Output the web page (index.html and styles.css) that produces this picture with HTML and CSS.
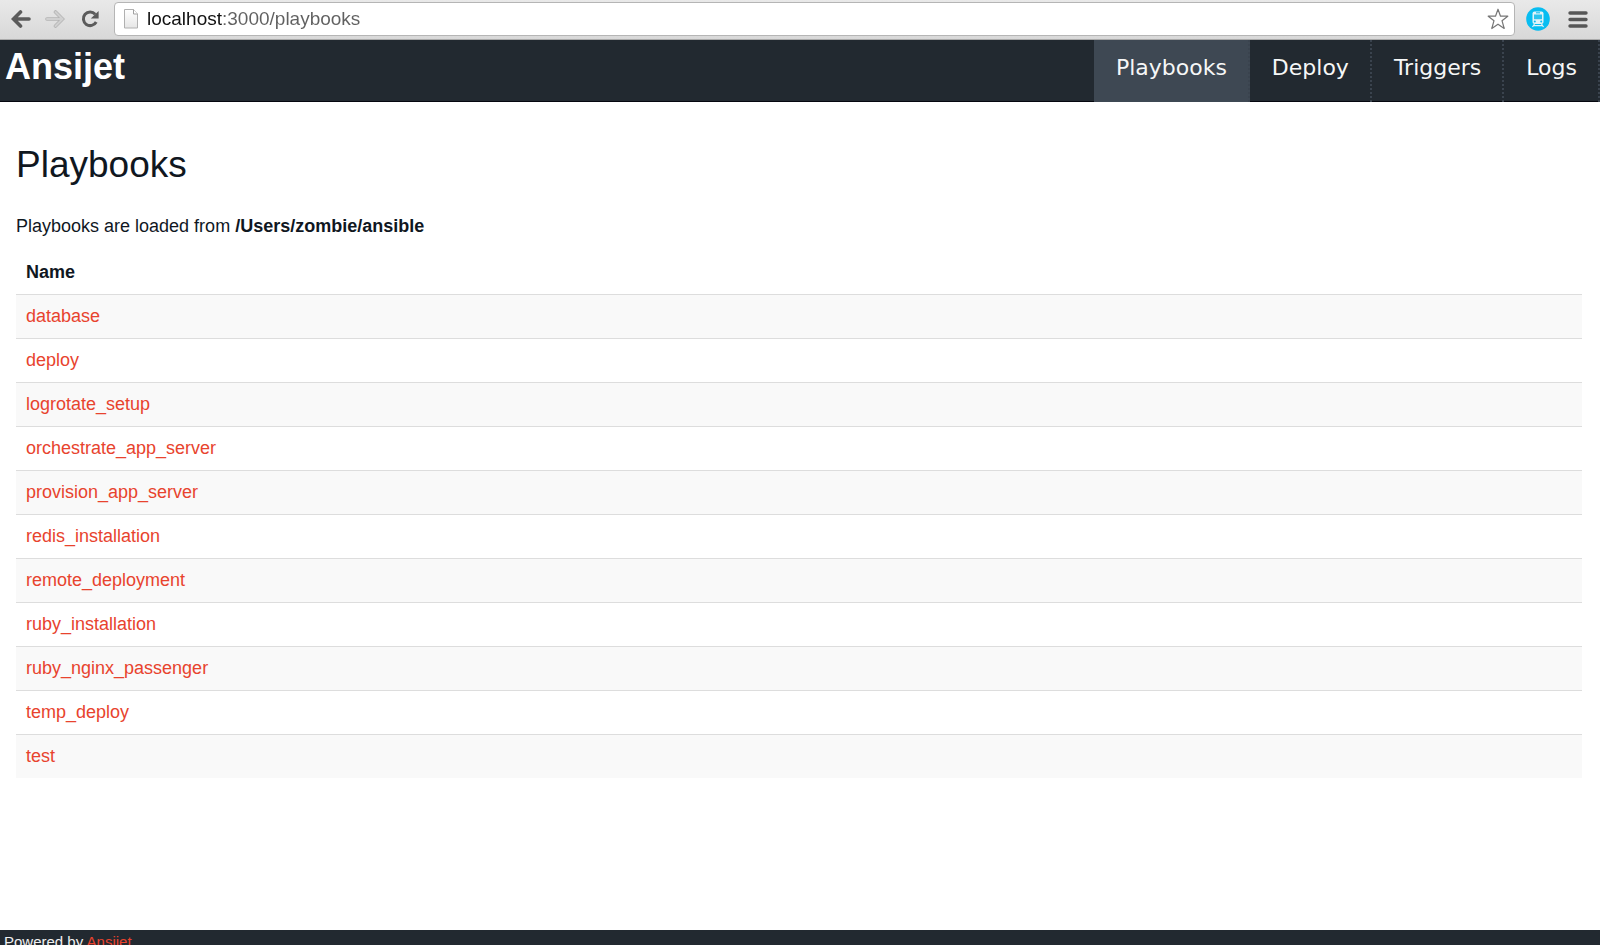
FILE: index.html
```html
<!DOCTYPE html>
<html lang="en">
<head>
    <meta charset="UTF-8">
    <title>Ansijet</title>
    <link rel="stylesheet" href="styles.css">
</head>
<body>
<div class="toolbar">
    <button type="button" class="tool back" aria-label="Back">
        <svg width="20" height="18" viewBox="0 0 20 18"><path d="M9.500 2L2.500 9l7 7M3 9h15" fill="none" stroke="#5b5b5b" stroke-width="3.600" stroke-linecap="round" stroke-linejoin="miter"/></svg>
    </button>
    <button type="button" class="tool forward" aria-label="Forward">
        <svg width="20" height="18" viewBox="0 0 20 18"><path d="M10.500 2l7 7-7 7M17 9H2" fill="none" stroke="#b4b4b4" stroke-width="3.600" stroke-linecap="round"/><path d="M10.500 2l7 7-7 7M17 9H2" fill="none" stroke="#d0d0d0" stroke-width="2" stroke-linecap="round"/></svg>
    </button>
    <button type="button" class="tool reload" aria-label="Reload">
        <svg width="18" height="18" viewBox="0 0 18 18"><path d="M14.200 4.200A6.800 6.800 0 1 0 15.200 12" fill="none" stroke="#5b5b5b" stroke-width="3"/><path d="M17.600 1v7.600H9.800z" fill="#5b5b5b"/></svg>
    </button>
    <div class="address">
        <svg width="16" height="20" viewBox="0 0 16 20">
            <defs><linearGradient id="sheet" x1="0" y1="0" x2="0" y2="1"><stop offset="0" stop-color="#fff"/><stop offset="1" stop-color="#e6e6e6"/></linearGradient></defs>
            <path d="M1.500 .5h9l4 4.500v14h-13z" fill="url(#sheet)" stroke="#b0b0b0"/><path d="M10.500 .5V5h4" fill="#fff" stroke="#a0a0a0"/>
        </svg>
        <input type="text" class="url" aria-label="Address" value="localhost:3000/playbooks">
        <button type="button" class="tool" aria-label="Bookmark">
            <svg width="22" height="22" viewBox="0 0 22 22"><path d="M11 1.200l2.500 7h7.300l-5.800 4.500 2.200 7.800L11 16.200l-6.200 4.300L7 12.700 1.200 8.200h7.300z" fill="#fff" stroke="#777" stroke-width="1.200" stroke-linejoin="round"/></svg>
        </button>
    </div>
    <button type="button" class="tool extension" aria-label="Trains">
        <svg width="24" height="24" viewBox="0 0 24 24">
            <circle cx="12" cy="12" r="11.800" fill="#08bdf1"/>
            <path d="M8.500 4.500h7q2 0 2 2v8.500q0 2-2 2h-7q-2 0-2-2V6.500q0-2 2-2z" fill="#e2f3f8"/>
            <path d="M10 5.800h4" stroke="#08bdf1"/>
            <path d="M8 7.500h8v4.700H8z" fill="#2cc4ee"/>
            <circle cx="8.800" cy="14.500" r="1" fill="#08bdf1"/><circle cx="15.200" cy="14.500" r="1" fill="#08bdf1"/>
            <path d="M8.500 17l-2 3M15.500 17l2 3M7.500 18.700h9" stroke="#e2f3f8" stroke-width="1.200"/>
        </svg>
    </button>
    <button type="button" class="tool" aria-label="Menu">
        <svg width="20" height="18" viewBox="0 0 20 18"><path d="M2 3h16M2 9.500h16M2 16h16" stroke="#575757" stroke-width="3.400" stroke-linecap="round"/></svg>
    </button>
</div>

<header class="header">
    <a href="#" class="brand">Ansijet</a>
    <nav class="nav">
        <a href="#" class="active">Playbooks</a>
        <a href="#">Deploy</a>
        <a href="#">Triggers</a>
        <a href="#">Logs</a>
    </nav>
</header>

<main class="content">
    <h1>Playbooks</h1>
    <p>Playbooks are loaded from <strong>/Users/zombie/ansible</strong></p>
    <table class="list">
        <thead>
            <tr><th>Name</th></tr>
        </thead>
        <tbody>
            <tr><td><a href="#">database</a></td></tr>
            <tr><td><a href="#">deploy</a></td></tr>
            <tr><td><a href="#">logrotate_setup</a></td></tr>
            <tr><td><a href="#">orchestrate_app_server</a></td></tr>
            <tr><td><a href="#">provision_app_server</a></td></tr>
            <tr><td><a href="#">redis_installation</a></td></tr>
            <tr><td><a href="#">remote_deployment</a></td></tr>
            <tr><td><a href="#">ruby_installation</a></td></tr>
            <tr><td><a href="#">ruby_nginx_passenger</a></td></tr>
            <tr><td><a href="#">temp_deploy</a></td></tr>
            <tr><td><a href="#">test</a></td></tr>
        </tbody>
    </table>
</main>

<footer class="footer">Powered by <a href="#">Ansijet</a></footer>
</body>
</html>
```
FILE: styles.css
```css
* {
    box-sizing: border-box;
    margin: 0;
    padding: 0;
}

body {
    display: flex;
    flex-direction: column;
    height: 100vh;
    overflow: hidden;
    font-family: "Liberation Sans", Arial, sans-serif;
    font-size: 18px;
    line-height: 23px;
    color: #10171f;
    background: #fff;
}

a {
    color: #e8432e;
    text-decoration: none;
}

/* browser bar */
.toolbar {
    display: flex;
    flex: none;
    align-items: center;
    height: 40px;
    padding: 0 12px 2px 11px;
    background: linear-gradient(#e9e9e9, #d8d8d8);
    border-bottom: 1px solid #aaa;
}

.tool {
    display: flex;
    border: 0;
    background: none;
}

.forward {
    margin: 0 16px 0 14px;
}

.address {
    display: flex;
    flex: 1;
    align-items: center;
    height: 34px;
    margin: 0 11px 0 15px;
    padding: 0 5px 0 8px;
    background: #fff;
    border: 1px solid #b5b5b5;
    border-radius: 4px;
}

/* the host is black, the rest of the address is grey */
.url {
    flex: 1;
    min-width: 0;
    margin-left: 8px;
    border: 0;
    outline: 0;
    font: 19px/24px "Liberation Sans", Arial, sans-serif;
    color: transparent;
    background: linear-gradient(to right, #111 75px, #606060 75px);
    -webkit-background-clip: text;
    background-clip: text;
}

.extension {
    margin-right: 18px;
}

/* site header */
.header {
    display: flex;
    flex: none;
    justify-content: space-between;
    height: 62px;
    background: #222930;
    box-shadow: inset 0 -1px #05070f;
}

.brand {
    padding: 6px 5px;
    font-size: 36px;
    font-weight: bold;
    line-height: 42px;
    color: #fff;
}

.nav {
    display: flex;
}

.nav a {
    padding: 13px 21px 0 22px;
    font-family: "DejaVu Sans", Verdana, sans-serif;
    font-size: 22px;
    line-height: 30px;
    color: #f6f7f7;
    border-right: 2px dotted #3a434e;
}

.nav .active {
    background: #3e4853;
}

/* page */
.content {
    flex: 1;
    padding: 41px 18px 0 16px;
}

.content h1 {
    margin-bottom: 28px;
    font-size: 37px;
    font-weight: normal;
    line-height: 44px;
}

.content p {
    margin-bottom: 13px;
}

.list {
    width: 100%;
    border-collapse: collapse;
}

.list th,
.list td {
    padding: 10px;
    text-align: left;
}

.list td {
    border-top: 1px solid #ddd;
}

.list tbody tr:nth-child(odd) {
    background: #f9f9f9;
}

.footer {
    flex: none;
    height: 15px;
    padding: 3px 4px;
    font-size: 15px;
    line-height: 18px;
    color: #f0f0f0;
    background: #222930;
}
```
